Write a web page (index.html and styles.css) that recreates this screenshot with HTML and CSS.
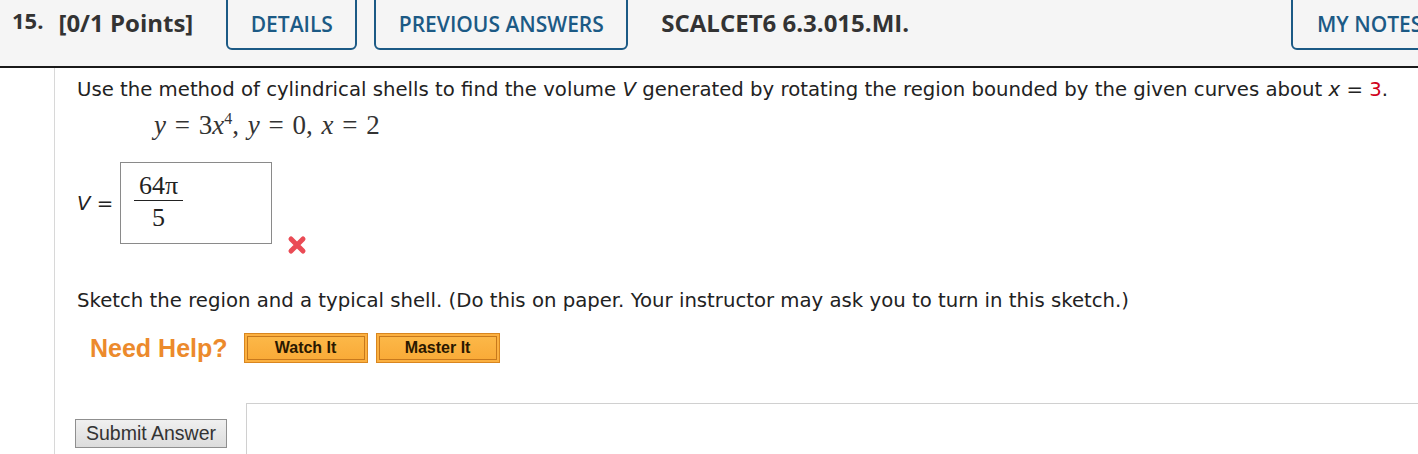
FILE: index.html
```html
<!DOCTYPE html>
<html lang="en">
<head>
    <meta charset="UTF-8" />
    <title>Question 15</title>
    <link rel="stylesheet" href="styles.css">
</head>
<body>
    <div id="question">
        <div class="q-header">
            <span class="q-num">15.</span>
            <span class="q-points">[0/1 Points]</span>
            <button class="hdr-btn btn-details">DETAILS</button>
            <button class="hdr-btn btn-prev">PREVIOUS ANSWERS</button>
            <span class="q-code">SCALCET6 6.3.015.MI.</span>
            <button class="hdr-btn btn-notes">MY NOTES</button>
        </div>

        <div class="q-body">
            <p class="q-text">Use the method of cylindrical shells to find the volume <i>V</i> generated by rotating the region bounded by the given curves about <i>x</i> = <span class="red">3</span>.</p>
            <div class="math-line"><i>y</i> = 3<i>x</i><sup>4</sup>, <i>y</i> = 0, <i>x</i> = 2</div>

            <div class="answer-row">
                <span class="answer-label"><i>V</i> =</span>
                <div class="answer-box">
                    <div class="frac">
                        <span class="num">64π</span>
                        <span class="den">5</span>
                    </div>
                </div>
                <svg class="wrong" width="20" height="20" viewBox="0 0 20 20">
                    <path d="M4 4 L16 16 M16 4 L4 16" stroke="#ea4b55" stroke-width="5" stroke-linecap="round" />
                </svg>
            </div>

            <p class="q-text sketch">Sketch the region and a typical shell. (Do this on paper. Your instructor may ask you to turn in this sketch.)</p>

            <div class="help-row">
                <span class="need-help">Need Help?</span>
                <button class="help-btn">Watch It</button>
                <button class="help-btn">Master It</button>
            </div>

            <div class="submit-row">
                <button class="submit-btn">Submit Answer</button>
                <div class="notes-area"></div>
            </div>
        </div>
    </div>
</body>
</html>
```

FILE: styles.css
```css
body {
    margin: 0;
    background: #ffffff;
    font-family: "DejaVu Sans", Verdana, sans-serif;
    color: #222;
    overflow: hidden;
}

.q-header {
    display: flex;
    align-items: flex-start;
    height: 66px;
    background: #f5f5f5;
    border-bottom: 2px solid #1a1a1a;
    white-space: nowrap;
    color: #333;
    font-family: "Open Sans", sans-serif;
}

.q-num {
    margin: 5px 0 0 12px;
    font-size: 22px;
    font-weight: 700;
}

.q-points {
    margin: 6px 0 0 15px;
    font-size: 24px;
    font-weight: 700;
}

.hdr-btn {
    height: 61px;
    margin-top: -11px;
    padding: 9px 0 0;
    border: 2px solid #1c5a85;
    border-radius: 6px;
    background: #f5f5f5;
    color: #1c5a85;
    font-family: "Open Sans", sans-serif;
    font-size: 21px;
    font-weight: 600;
    flex-shrink: 0;
}

.btn-details {
    margin-left: 33px;
    width: 131px;
}

.btn-prev {
    margin-left: 17px;
    width: 254px;
}

.q-code {
    margin: 6px 0 0 33px;
    font-size: 24px;
    font-weight: 700;
}

.btn-notes {
    margin-left: auto;
    margin-right: -60px;
    width: 187px;
    text-align: left;
    padding-left: 24px;
}

.q-body {
    margin-left: 54px;
    border-left: 1px solid #d8d8d8;
    padding: 8px 0 0 22px;
    height: 400px;
}

.q-text {
    margin: 0;
    font-size: 19.7px;
    line-height: 28px;
    color: #222;
    white-space: nowrap;
}

.red {
    color: #d0021b;
}

.math-line {
    margin: 0 0 0 77px;
    font-family: "Liberation Serif", serif;
    font-size: 27px;
    line-height: 30px;
    color: #333;
    word-spacing: 2px;
}

.math-line sup {
    font-size: 16px;
}

.answer-row {
    display: flex;
    align-items: flex-start;
    margin-top: 22px;
}

.answer-label {
    margin-top: 30px;
    font-size: 19.7px;
    width: 43px;
}

.answer-box {
    width: 150px;
    height: 80px;
    border: 1px solid #8a8a8a;
}

.frac {
    display: inline-flex;
    flex-direction: column;
    align-items: center;
    margin: 9px 0 0 13px;
    font-family: "Liberation Serif", serif;
    font-size: 26px;
    color: #222;
}

.frac .num {
    border-bottom: 1px solid #222;
    padding: 0 5px 1px;
    line-height: 27px;
}

.frac .den {
    line-height: 33px;
}

.wrong {
    margin: 73px 0 0 15px;
}

.sketch {
    margin-top: 32px;
}

.help-row {
    display: flex;
    align-items: center;
    margin: 18px 0 0 13px;
}

.need-help {
    font-family: "Liberation Sans", Arial, sans-serif;
    font-weight: 700;
    font-size: 25px;
    color: #ec8a2c;
    margin-right: 16px;
}

.help-btn {
    width: 124px;
    height: 30px;
    border: 1px solid #d9861f;
    background: linear-gradient(#fcb94a, #f9a936);
    box-shadow: inset 0 0 0 2px #fbb040, inset 0 0 0 3px #c7781c;
    font-family: "Liberation Sans", Arial, sans-serif;
    font-weight: 700;
    font-size: 16px;
    color: #2a1800;
    margin-right: 8px;
    padding: 0;
}

.submit-row {
    display: flex;
    align-items: flex-start;
    margin-top: 40px;
}

.submit-btn {
    margin: 16px 0 0 -2px;
    width: 152px;
    height: 29px;
    border: 1px solid #8f8f8f;
    background: linear-gradient(#f0f0f0, #dcdcdc);
    font-family: "Liberation Sans", Arial, sans-serif;
    font-size: 19.5px;
    color: #333;
    padding: 0;
}

.notes-area {
    flex: 1;
    margin-left: 19px;
    height: 60px;
    border-top: 1px solid #d0d0d0;
    border-left: 1px solid #d0d0d0;
}
```
